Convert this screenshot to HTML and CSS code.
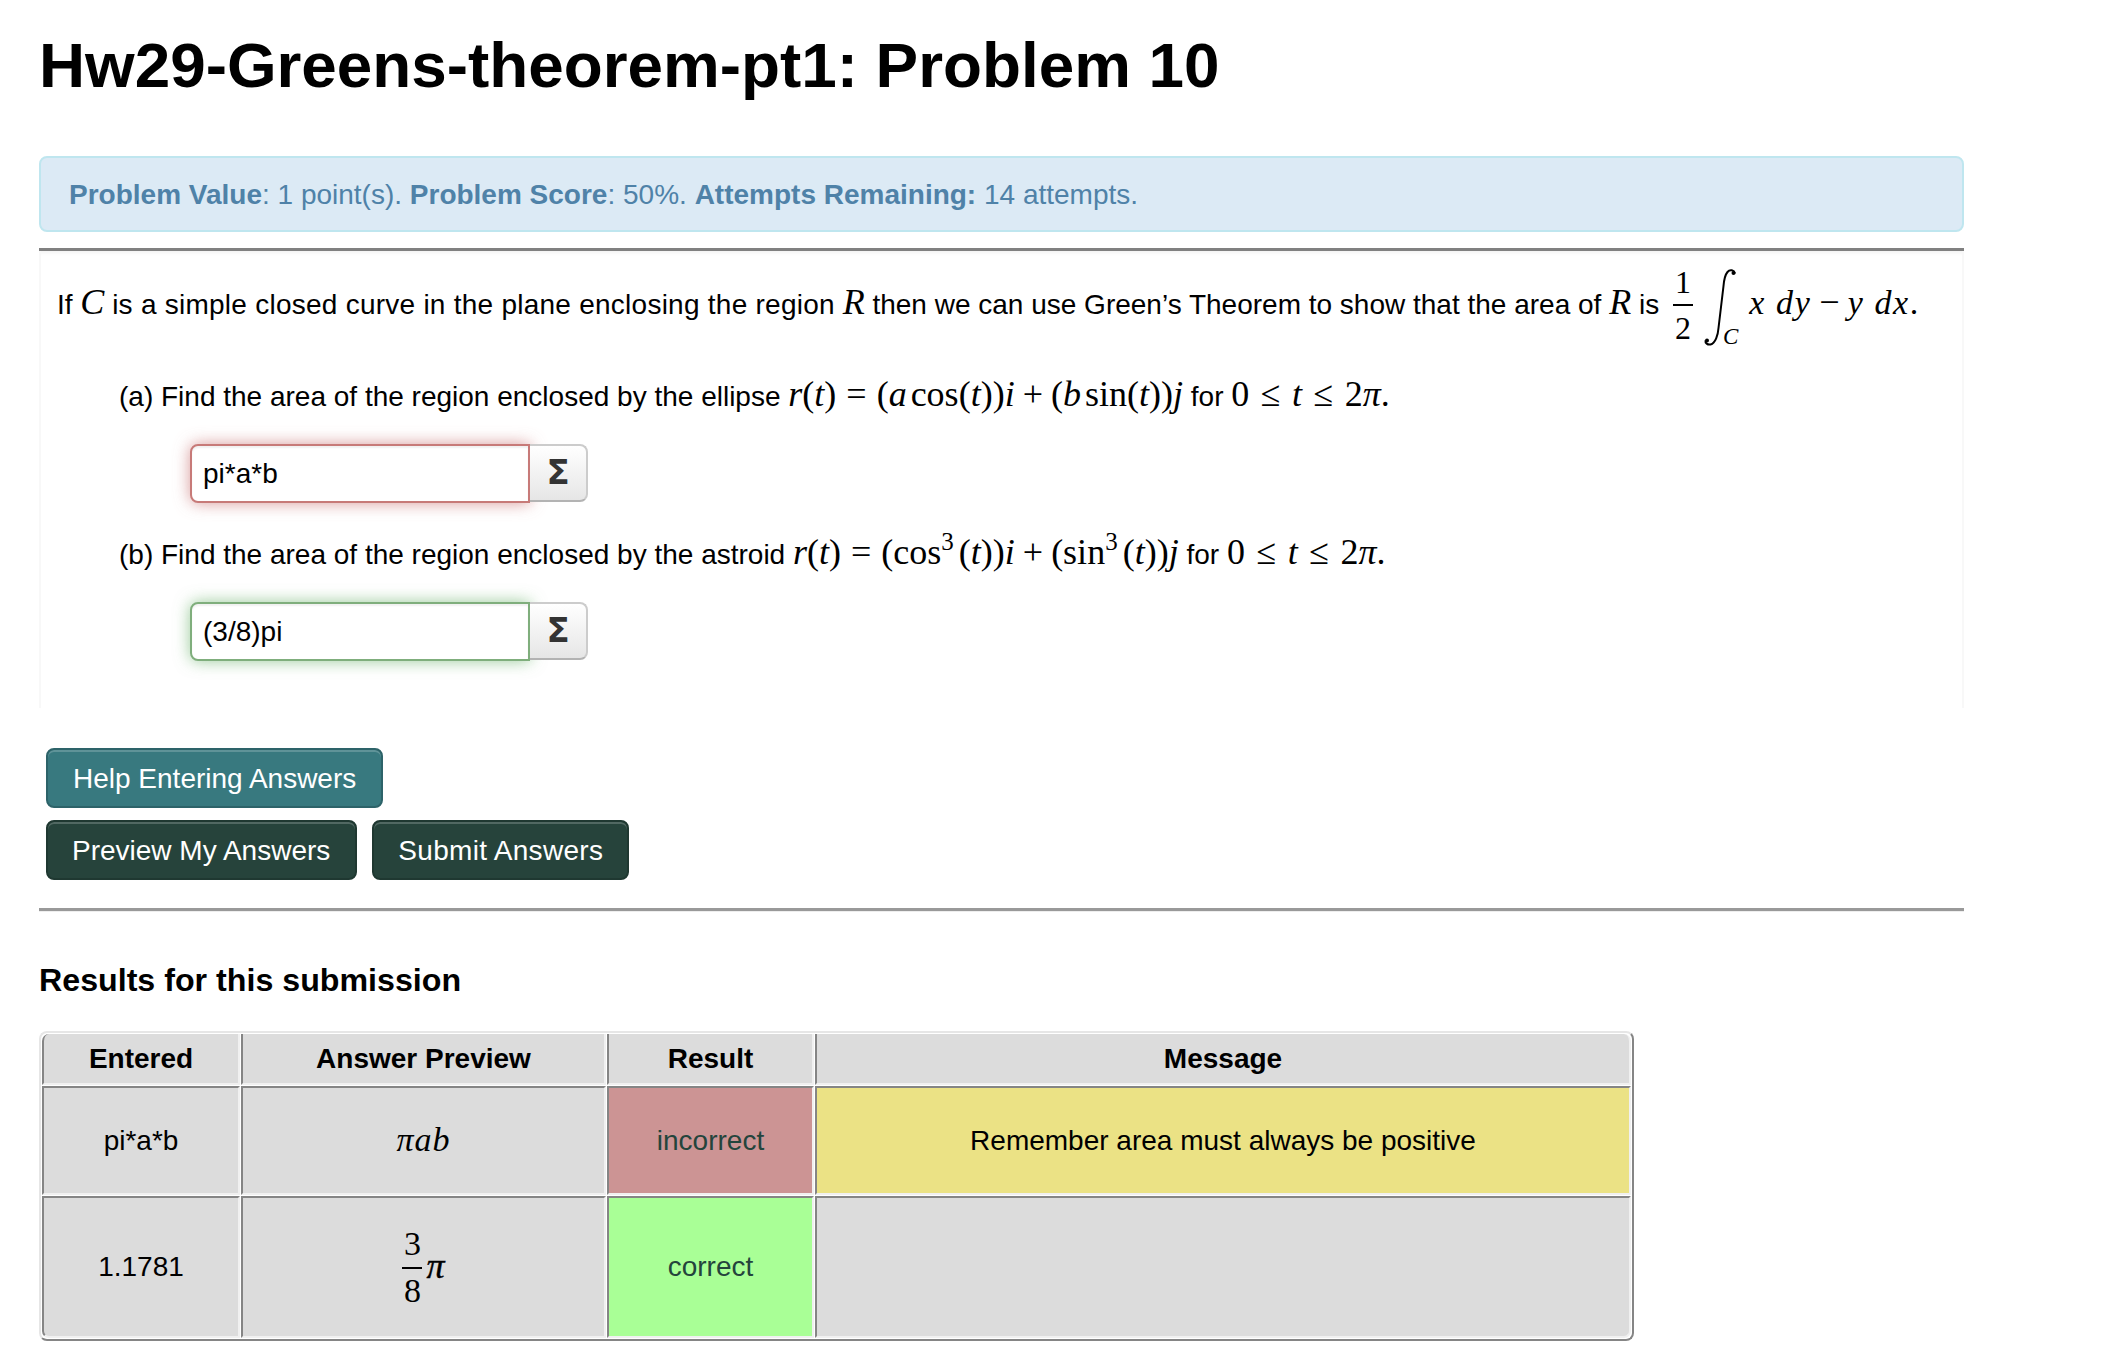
FILE: index.html
```html
<!DOCTYPE html>
<html lang="en">
<head>
<meta charset="utf-8">
<title>Hw29-Greens-theorem-pt1: Problem 10</title>
<link rel="stylesheet" href="styles.css">
</head>
<body>
<main class="page">
  <h1 class="title">Hw29-Greens-theorem-pt1: Problem 10</h1>
  <div class="alert"><b>Problem Value</b>: 1 point(s). <b>Problem Score</b>: 50%. <b>Attempts Remaining:</b> 14 attempts.</div>
  <hr class="rule-dark">
  <section class="problem">
    <p class="lead">If <span class="m it">C</span> <span class="wide">is a simple closed curve in the plane enclosing the region</span> <span class="m it">R</span> then we can use Green’s Theorem to show that the area of <span class="m it">R</span> is <span class="m frac lead-frac"><span class="frac-num">1</span><span class="bar"></span><span class="frac-den">2</span></span><span class="integral"><svg class="int-sign" viewBox="0 0 32 78" aria-hidden="true"><path d="M31 5.500C30 2 26 1 23.500 4C21 7 20 12 19.500 18L14.500 60C14 67 11.500 75 6.500 76.500C3.500 77 1 75 1.500 72.500" fill="none" stroke="#000" stroke-width="2"/><circle cx="29.500" cy="5" r="2"/><circle cx="3" cy="72.500" r="2"/></svg><span class="m it int-sub">C</span></span><span class="m it spaced int-body">x dy</span><span class="m bin">−</span><span class="m it spaced int-tail">y dx</span><span class="m int-tail">.</span></p>
    <p class="part">(a) Find the area of the region enclosed by the ellipse <span class="m"><i>r</i>(<i>t</i>)<span class="rel">=</span>(<i>a</i><span class="thin">cos</span>(<i>t</i>))<i>i</i><span class="bin">+</span>(<i>b</i><span class="thin">sin</span>(<i>t</i>))<i>j</i></span> for <span class="m range">0<span class="rel">≤</span><i>t</i><span class="rel">≤</span>2<i>π</i>.</span></p>
    <div class="answer">
      <input class="ans-input wrong" type="text" value="pi*a*b" readonly>
      <span class="sigma">Σ</span>
    </div>
    <p class="part part-b">(b) Find the area of the region enclosed by the astroid <span class="m"><i>r</i>(<i>t</i>)<span class="rel">=</span>(cos<sup>3</sup>(<i>t</i>))<i>i</i><span class="bin">+</span>(sin<sup>3</sup>(<i>t</i>))<i>j</i></span> for <span class="m range">0<span class="rel">≤</span><i>t</i><span class="rel">≤</span>2<i>π</i>.</span></p>
    <div class="answer">
      <input class="ans-input right" type="text" value="(3/8)pi" readonly>
      <span class="sigma">Σ</span>
    </div>
  </section>
  <div class="actions">
    <div class="btn-row"><button class="btn btn-help" type="button">Help Entering Answers</button></div>
    <div class="btn-row"><button class="btn btn-dark" type="button">Preview My Answers</button><button class="btn btn-dark btn-submit" type="button">Submit Answers</button></div>
  </div>
  <hr class="rule-light">
  <h2 class="results-head">Results for this submission</h2>
  <table class="results">
    <thead>
      <tr><th class="c1">Entered</th><th class="c2">Answer Preview</th><th class="c3">Result</th><th class="c4">Message</th></tr>
    </thead>
    <tbody>
      <tr class="row-a">
        <td>pi*a*b</td>
        <td><span class="m it preview">πab</span></td>
        <td class="bad">incorrect</td>
        <td class="msg">Remember area must always be positive</td>
      </tr>
      <tr class="row-b">
        <td>1.1781</td>
        <td><span class="m frac table-frac"><span class="frac-num">3</span><span class="bar"></span><span class="frac-den">8</span></span><span class="m it pi">π</span></td>
        <td class="good">correct</td>
        <td></td>
      </tr>
    </tbody>
  </table>
</main>
</body>
</html>
```
FILE: styles.css
```css
* { box-sizing: border-box; }
html, body { margin: 0; padding: 0; background: #fff; }
body { font-family: "Liberation Sans", Arial, sans-serif; font-size: 28px; line-height: 40px; color: #000; }
.page { padding: 0 156px 0 39px; }
.title { margin: 0; padding-top: 30px; font-size: 63.8px; line-height: 70px; font-weight: 700; color: #000; }
.alert { margin-top: 56px; height: 76px; padding: 0 28px; line-height: 74px; background: #dceaf5; border: 2px solid #bfe6ef; border-radius: 8px; color: #4f82a8; }
.rule-dark { margin: 16px 0 0; height: 3px; border: 0; background: #808080; }
.problem { height: 457px; padding: 0 0 0 16px; border: 2px solid #f8f8f8; border-top: 0; border-bottom: 0; box-shadow: inset 0 6px 5px -5px #eee; }
.lead { margin: 0; padding-top: 15px; }
.wide { letter-spacing: .25px; }
.m { font-family: "Liberation Serif", "Times New Roman", serif; font-size: 36px; }
.it { font-style: italic; }
.spaced { letter-spacing: 1.6px; }
.rel { margin: 0 10px; }
.range .rel { margin: 0 11.5px; }
.bin { margin: 0 8px; }
.thin { margin-left: 4px; }
.m sup { font-size: 25px; line-height: 0; vertical-align: 14px; margin-right: 5px; }
.frac { display: inline-block; text-align: center; font-style: normal; }
.frac-num, .frac-den { display: block; line-height: 33px; }
.bar { display: block; height: 2px; background: #000; }
.lead-frac { width: 20px; margin: 0 7px 0 6px; font-size: 32px; vertical-align: -25px; }
.lead-frac .bar { margin: 5px 0 6px; }
.integral { display: inline-flex; align-items: flex-end; vertical-align: -32px; margin: 0 4px; }
.int-sign { width: 32px; height: 78px; display: block; }
.int-sub { font-size: 23px; line-height: 23px; margin-left: -13px; margin-bottom: -2px; }
.int-body, .int-tail { font-size: 34px; }
.int-body { margin-left: 7px; }
.part { margin: 28px 0 0 62px; }
.part-b { margin-top: 29px; }
.answer { display: flex; align-items: flex-start; margin: 27px 0 0 133px; }
.ans-input { width: 340px; height: 59px; padding: 0 11px; font: inherit; color: #000; background: #fff; border: 2px solid; border-radius: 8px 0 0 8px; outline: 0; }
.ans-input.wrong { border-color: #c77a78; box-shadow: inset 0 2px 2px rgba(0,0,0,.06), 0 0 16px rgba(200,110,110,.7); }
.ans-input.right { border-color: #7fae7c; box-shadow: inset 0 2px 2px rgba(0,0,0,.06), 0 0 16px rgba(110,180,110,.7); }
.sigma { width: 58px; height: 58px; padding-bottom: 3px; display: flex; align-items: center; justify-content: center; font-family: "DejaVu Sans", sans-serif; font-weight: 700; font-size: 34px; color: #333; background: linear-gradient(#fff, #e6e6e6); border: 2px solid #ccc; border-left: 0; border-bottom-color: #b3b3b3; border-radius: 0 8px 8px 0; }
.actions { margin: 40px 0 0 7px; display: flex; flex-direction: column; gap: 12px; }
.btn-row { display: flex; gap: 15px; }
.btn { height: 60px; padding: 2px 25px 0; font: inherit; color: #fff; border: 2px solid; border-radius: 8px; cursor: pointer; }
.btn-help { background: #38797f; border-color: #2d6369; box-shadow: inset 0 2px 0 rgba(255,255,255,.2); }
.btn-dark { padding: 2px 25px 0 24px; background: #26433b; border-color: #1f3831; box-shadow: inset 0 2px 0 rgba(255,255,255,.2); }
.btn-submit { padding-right: 24px; letter-spacing: .3px; }
.rule-light { margin: 28px 0 0; height: 3px; border: 0; background: #999; box-shadow: 0 1px 0 #eee; }
.results-head { margin: 0; padding-top: 49px; font-size: 32.2px; line-height: 40px; font-weight: 700; color: #000; }
.results { margin-top: 31px; width: 1595px; table-layout: fixed; border-collapse: separate; border-spacing: 1px; border: 2px solid; border-color: #e6e6e6 #858585 #858585 #e6e6e6; border-radius: 8px; }
.results th, .results td { padding: 0; text-align: center; vertical-align: middle; background: #dcdcdc; border: 2px solid; border-color: #858585 #f0f0f0 #f0f0f0 #858585; }
.results th { height: 51px; padding-top: 1px; font-weight: 700; border-top: 0; }
.results thead th:first-child { border-top-left-radius: 7px; }
.results thead th:last-child { border-top-right-radius: 7px; }
.results tbody tr:last-child td:first-child { border-bottom-left-radius: 7px; }
.results tbody tr:last-child td:last-child { border-bottom-right-radius: 7px; }
.c1 { width: 198px; }
.c2 { width: 365px; }
.c3 { width: 207px; }
.row-a td { height: 109px; }
.row-b td { height: 142px; }
.results td.bad { background: #cc9494; color: #24443c; }
.results td.good { background: #a9ff96; color: #24443c; }
.results td.msg { background: #ebe285; }
.preview { font-size: 34px; letter-spacing: 1px; }
.table-frac { width: 20px; margin-right: 4px; font-size: 34px; vertical-align: -24px; }
.table-frac .bar { margin: 7px 0 5px; }
.pi { -webkit-text-stroke: .4px #000; }
```
